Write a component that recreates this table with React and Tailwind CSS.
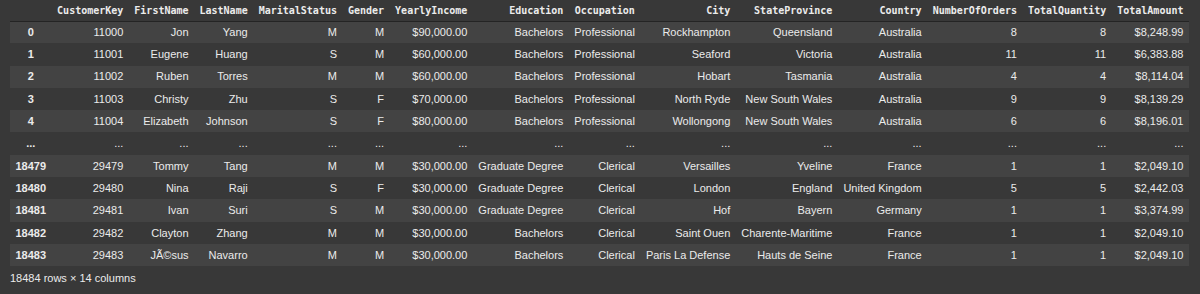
const COLUMNS = [
  'CustomerKey', 'FirstName', 'LastName', 'MaritalStatus', 'Gender', 'YearlyIncome',
  'Education', 'Occupation', 'City', 'StateProvince', 'Country', 'NumberOfOrders',
  'TotalQuantity', 'TotalAmount',
];

const ROWS = [
  ['0', '11000', 'Jon', 'Yang', 'M', 'M', '$90,000.00', 'Bachelors', 'Professional', 'Rockhampton', 'Queensland', 'Australia', '8', '8', '$8,248.99'],
  ['1', '11001', 'Eugene', 'Huang', 'S', 'M', '$60,000.00', 'Bachelors', 'Professional', 'Seaford', 'Victoria', 'Australia', '11', '11', '$6,383.88'],
  ['2', '11002', 'Ruben', 'Torres', 'M', 'M', '$60,000.00', 'Bachelors', 'Professional', 'Hobart', 'Tasmania', 'Australia', '4', '4', '$8,114.04'],
  ['3', '11003', 'Christy', 'Zhu', 'S', 'F', '$70,000.00', 'Bachelors', 'Professional', 'North Ryde', 'New South Wales', 'Australia', '9', '9', '$8,139.29'],
  ['4', '11004', 'Elizabeth', 'Johnson', 'S', 'F', '$80,000.00', 'Bachelors', 'Professional', 'Wollongong', 'New South Wales', 'Australia', '6', '6', '$8,196.01'],
  ['...', '...', '...', '...', '...', '...', '...', '...', '...', '...', '...', '...', '...', '...', '...'],
  ['18479', '29479', 'Tommy', 'Tang', 'M', 'M', '$30,000.00', 'Graduate Degree', 'Clerical', 'Versailles', 'Yveline', 'France', '1', '1', '$2,049.10'],
  ['18480', '29480', 'Nina', 'Raji', 'S', 'F', '$30,000.00', 'Graduate Degree', 'Clerical', 'London', 'England', 'United Kingdom', '5', '5', '$2,442.03'],
  ['18481', '29481', 'Ivan', 'Suri', 'S', 'M', '$30,000.00', 'Graduate Degree', 'Clerical', 'Hof', 'Bayern', 'Germany', '1', '1', '$3,374.99'],
  ['18482', '29482', 'Clayton', 'Zhang', 'M', 'M', '$30,000.00', 'Bachelors', 'Clerical', 'Saint Ouen', 'Charente-Maritime', 'France', '1', '1', '$2,049.10'],
  ['18483', '29483', 'JÃ©sus', 'Navarro', 'M', 'M', '$30,000.00', 'Bachelors', 'Clerical', 'Paris La Defense', 'Hauts de Seine', 'France', '1', '1', '$2,049.10'],
];

export default function App() {
  return (
    <div className="w-[1200px] h-[294px] bg-[#383838] text-[#ebebeb] font-['Liberation_Sans',Arial,sans-serif] text-[11px] overflow-hidden">
      <div className="pl-[10px]">
        <table className="border-collapse">
          <thead>
            <tr className="h-[21px] border-b border-[#242424]">
              <th className="px-[5.5px]" />
              {COLUMNS.map((c) => (
                <th
                  key={c}
                  className="px-[5.5px] text-right font-bold font-['DejaVu_Sans_Mono',monospace] text-[10px] text-[#ececec] whitespace-nowrap"
                >
                  {c}
                </th>
              ))}
            </tr>
          </thead>
          <tbody>
            {ROWS.map((row, i) => (
              <tr key={row[0]} className={`h-[22.3px] ${i % 2 === 0 ? 'bg-[#434343]' : ''}`}>
                <th className="px-[5.5px] text-center font-bold whitespace-nowrap">{row[0]}</th>
                {row.slice(1).map((v, j) => (
                  <td key={j} className="px-[5.5px] text-right whitespace-nowrap">
                    {v}
                  </td>
                ))}
              </tr>
            ))}
          </tbody>
        </table>
        <p className="mt-[6px] leading-[13px]">18484 rows × 14 columns</p>
      </div>
    </div>
  );
}
